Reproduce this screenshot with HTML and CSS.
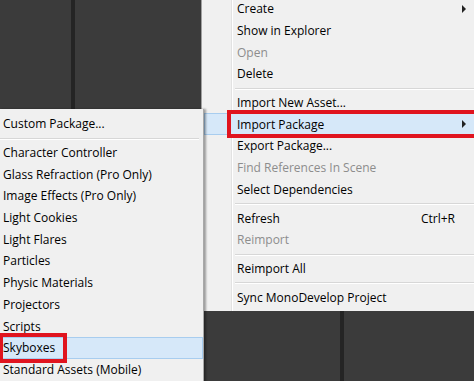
FILE: index.html
```html
<!DOCTYPE html>
<html lang="en">
<head>
    <meta charset="UTF-8">
    <title>Import Package</title>
    <link rel="stylesheet" href="styles.css">
</head>
<body>
    <div class="editor">
        <div class="editor-row top-row">
            <div class="panel panel-left"></div>
            <div class="divider"></div>
            <div class="panel"></div>
        </div>
        <div class="editor-row bottom-row">
            <div class="panel panel-bottom-left"></div>
            <div class="divider"></div>
            <div class="panel"></div>
        </div>
    </div>

    <!-- project context menu -->
    <div class="menu context-menu">
        <div class="item has-sub">Create</div>
        <div class="item">Show in Explorer</div>
        <div class="item disabled">Open</div>
        <div class="item">Delete</div>
        <div class="sep"></div>
        <div class="item">Import New Asset...</div>
        <div class="item has-sub active">Import Package<span class="mark mark-package"></span></div>
        <div class="item">Export Package...</div>
        <div class="item disabled">Find References In Scene</div>
        <div class="item">Select Dependencies</div>
        <div class="sep"></div>
        <div class="item">Refresh<span class="shortcut">Ctrl+R</span></div>
        <div class="item disabled">Reimport</div>
        <div class="sep"></div>
        <div class="item">Reimport All</div>
        <div class="sep"></div>
        <div class="item">Sync MonoDevelop Project</div>
    </div>

    <!-- Import Package submenu -->
    <div class="menu sub-menu">
        <div class="item">Custom Package...</div>
        <div class="sep"></div>
        <div class="item">Character Controller</div>
        <div class="item">Glass Refraction (Pro Only)</div>
        <div class="item">Image Effects (Pro Only)</div>
        <div class="item">Light Cookies</div>
        <div class="item">Light Flares</div>
        <div class="item">Particles</div>
        <div class="item">Physic Materials</div>
        <div class="item">Projectors</div>
        <div class="item">Scripts</div>
        <div class="item active">Skyboxes<span class="mark mark-skybox"></span></div>
        <div class="item">Standard Assets (Mobile)</div>
    </div>
</body>
</html>
```

FILE: styles.css
```css
body {
    margin: 0;
    width: 474px;
    height: 381px;
    overflow: hidden;
    position: relative;
    background-color: #3b3b3b;
    font-family: 'Open Sans', 'Noto Sans', sans-serif;
    font-size: 12px;
}

.editor {
    display: flex;
    flex-direction: column;
    height: 100%;
}

.editor-row {
    display: flex;
}

.top-row {
    height: 310px;
}

.bottom-row {
    flex: 1;
}

.panel {
    flex: 1;
    background-color: #3b3b3b;
}

.panel-left {
    flex: 0 0 71px;
}

.panel-bottom-left {
    flex: 0 0 340px;
}

.divider {
    width: 4px;
    background-color: #242424;
}

.menu {
    position: absolute;
    background-color: #f0f0f0;
    box-sizing: border-box;
    color: #000;
}

.context-menu {
    left: 201px;
    top: -5px;
    width: 280px;
    padding: 3px 0 3px 2px;
    border-left: 1px solid #a0a0a0;
    background-image: linear-gradient(to right, #f0f0f0 29px, #e2e2e2 29px, #e2e2e2 30px, #ffffff 30px, #ffffff 31px, #f0f0f0 31px);
}

.sub-menu {
    left: -1px;
    top: 109px;
    width: 205px;
    height: 280px;
    padding: 4px 0 0 0;
    border-right: 1px solid #a8a8a8;
    box-shadow: 2px 0 2px rgba(0, 0, 0, 0.35);
}

.item {
    position: relative;
    display: flex;
    align-items: center;
    justify-content: space-between;
    height: 21.7px;
    padding: 0 20px 0 33px;
    white-space: nowrap;
}

.sub-menu .item {
    padding: 0 4px;
}

.disabled {
    color: #8d8d8d;
}

.shortcut {
    margin-right: 6px;
}

.has-sub::after {
    content: '';
    position: absolute;
    right: 15px;
    top: 7px;
    border-left: 4px solid #222;
    border-top: 4px solid transparent;
    border-bottom: 4px solid transparent;
}

.active {
    background-color: #d6e8f9;
    box-shadow: inset 0 0 0 1px #a8cdef;
}

.sep {
    height: 7px;
    margin-left: 31px;
    background: linear-gradient(to bottom, transparent 3px, #d7d7d7 3px, #d7d7d7 4px, #ffffff 4px, #ffffff 5px, transparent 5px);
}

.sub-menu .sep {
    margin: 0 4px 0 0;
}

.mark {
    position: absolute;
    border: 4px solid #e0141f;
    box-sizing: border-box;
}

.mark-package {
    left: 23px;
    right: 0;
    top: -3px;
    bottom: -3px;
}

.mark-skybox {
    left: 0;
    width: 68px;
    top: -4px;
    bottom: -4px;
}
```
